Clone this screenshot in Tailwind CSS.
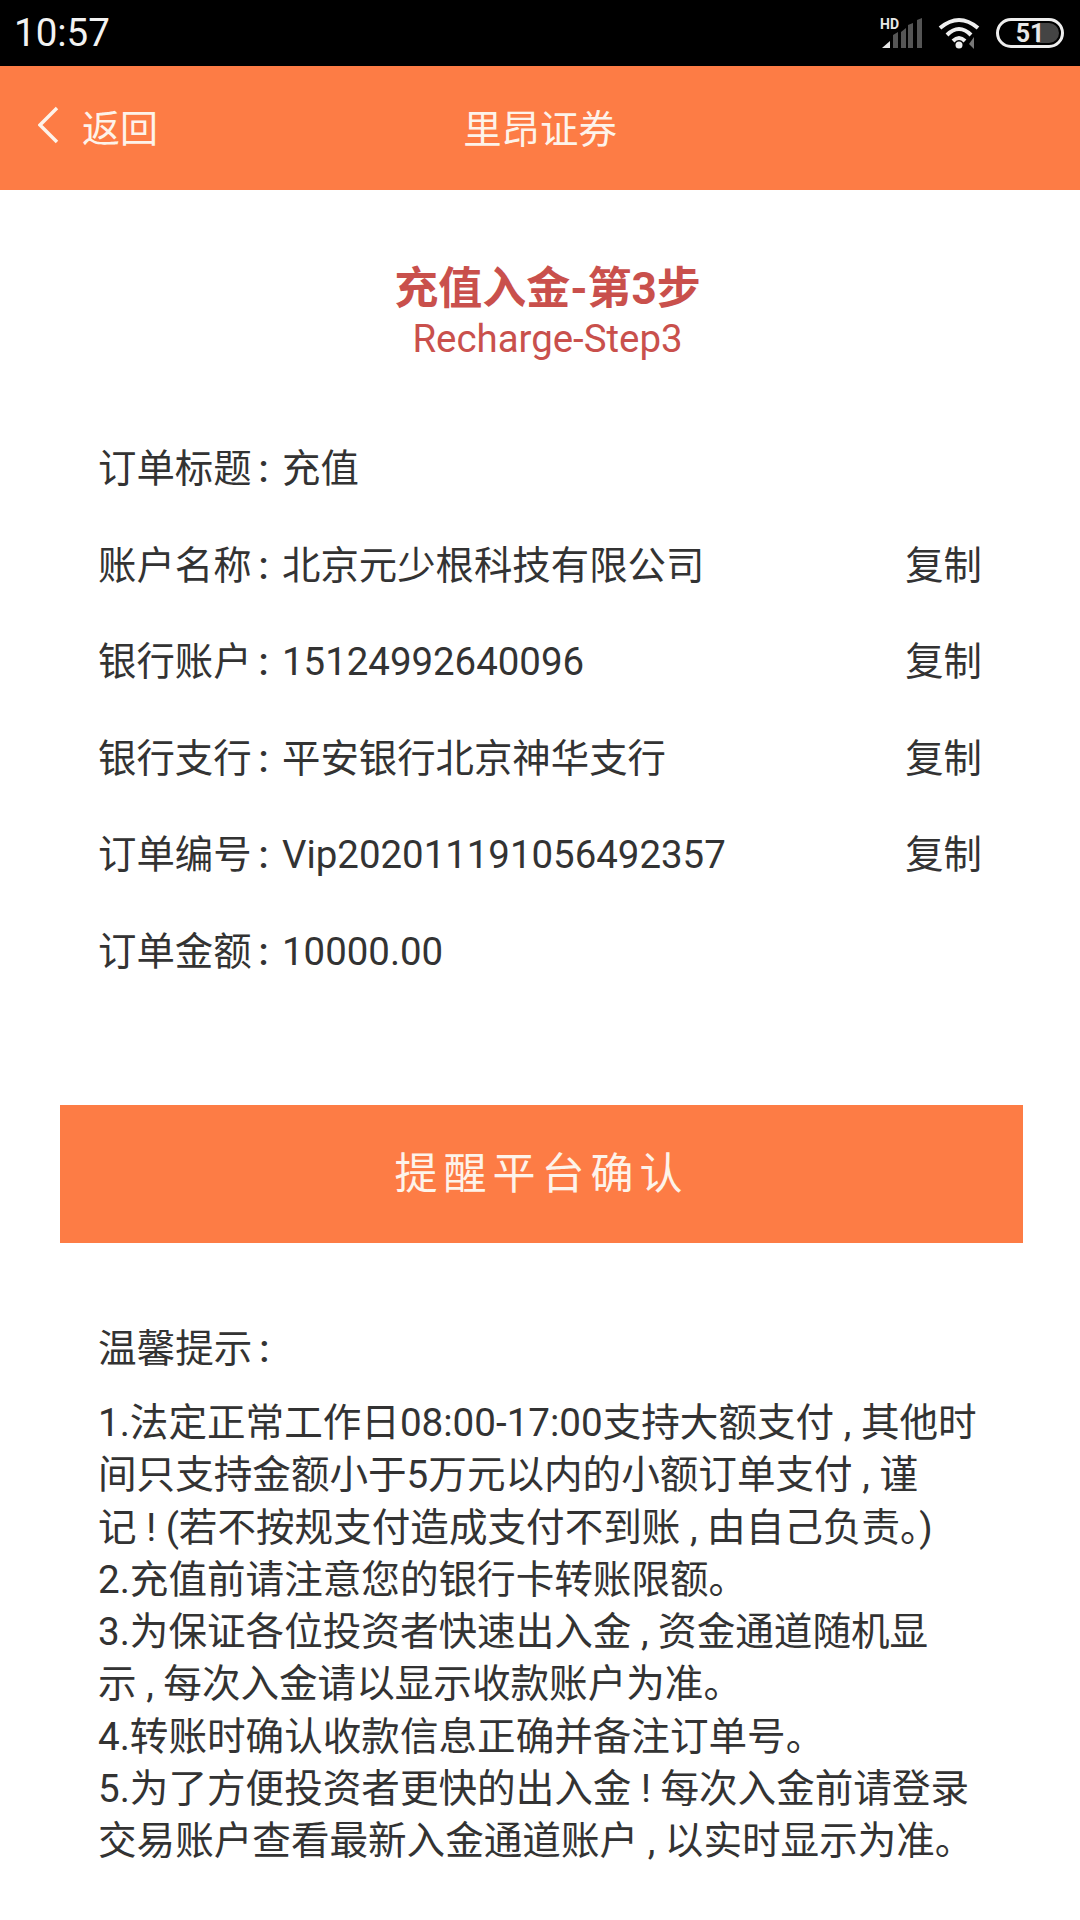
<!DOCTYPE html>
<html lang="zh-CN">
<head>
    <meta charset="UTF-8">
    <title>里昂证券</title>
    <script src="https://cdn.jsdelivr.net/npm/@tailwindcss/browser@4"></script>
</head>
<body class="bg-white font-['Roboto','Noto_Sans_CJK_SC',sans-serif]">
<div class="w-[1080px] h-[1920px] overflow-hidden flex flex-col">
    <!-- Status bar -->
    <div class="h-[66px] bg-black flex items-center justify-between pl-[14px] pr-4 text-white">
        <span class="text-[38.5px] leading-none text-[#f2f2f2]">10:57</span>
        <div class="flex items-center gap-4">
            <svg width="42" height="32" viewBox="0 0 42 32" class="overflow-visible">
                <text x="0" y="12" font-size="14" font-weight="700" fill="#e8e8e8" font-family="Roboto">HD</text>
                <path d="M2 31l8-7v7z" fill="#e8e8e8"/>
                <path d="M13 31V18l5-3v16zM21 31V15l5-4v20zM28 31V8l5-2v25zM37 31V3l5-2v30z" fill="#555"/>
            </svg>
            <svg width="42" height="32" viewBox="0 0 42 32">
                <path d="M2 11Q21-5 40 11" fill="none" stroke="#eee" stroke-width="4"/>
                <path d="M9 18Q21 6 33 18" fill="none" stroke="#eee" stroke-width="4"/>
                <path d="M15 24Q21 18 27 24" fill="none" stroke="#eee" stroke-width="4"/>
                <circle cx="21" cy="28" r="3.5" fill="#eee"/>
                <path d="M36 20v12l-5-5z" fill="#777"/>
            </svg>
            <div class="relative w-[68px] h-[30px] rounded-full border-[3px] border-[#eee] overflow-hidden flex items-center justify-center">
                <div class="absolute right-[2px] top-[2px] bottom-[2px] w-[22px] rounded-r-full bg-[#444]"></div>
                <span class="relative text-[25px] leading-none font-bold text-[#e8e8e8]">51</span>
            </div>
        </div>
    </div>

    <!-- Header -->
    <header class="relative h-[124px] bg-[#fd7c45] flex items-center justify-center text-[#fdf3ea] pt-[4px]">
        <div class="absolute left-[38px] top-0 h-full flex items-center gap-[22px]">
            <svg width="22" height="38" viewBox="0 0 22 38" class="-mt-[6px]"><path d="M19 2L2 19l17 17" fill="none" stroke="#fdf3ea" stroke-width="3.5"/></svg>
            <span class="text-[38px] pt-[3px]">返回</span>
        </div>
        <span class="text-[38.4px]">里昂证券</span>
    </header>

    <!-- Title -->
    <div class="pt-[72px] text-center text-[#c9504c] pl-[15px]">
        <p class="text-[44px] leading-[54px] font-bold">充值入金-第3步</p>
        <p class="text-[38.4px] leading-[46px]">Recharge-Step3</p>
    </div>

    <!-- Order info -->
    <div class="mt-[59px] pl-[98px] pr-[98px] text-[38.4px] text-[#333]">
        <div class="h-[96.5px] flex items-center justify-between"><span><span class="inline-block w-[184px]">订单标题<b class="ml-[7px] font-medium">:</b></span>充值</span></div>
        <div class="h-[96.5px] flex items-center justify-between"><span><span class="inline-block w-[184px]">账户名称<b class="ml-[7px] font-medium">:</b></span>北京元少根科技有限公司</span><span>复制</span></div>
        <div class="h-[96.5px] flex items-center justify-between"><span><span class="inline-block w-[184px]">银行账户<b class="ml-[7px] font-medium">:</b></span>15124992640096</span><span>复制</span></div>
        <div class="h-[96.5px] flex items-center justify-between"><span><span class="inline-block w-[184px]">银行支行<b class="ml-[7px] font-medium">:</b></span>平安银行北京神华支行</span><span>复制</span></div>
        <div class="h-[96.5px] flex items-center justify-between"><span><span class="inline-block w-[184px]">订单编号<b class="ml-[7px] font-medium">:</b></span>Vip202011191056492357</span><span>复制</span></div>
        <div class="h-[96.5px] flex items-center justify-between"><span><span class="inline-block w-[184px]">订单金额<b class="ml-[7px] font-medium">:</b></span>10000.00</span></div>
    </div>

    <!-- Confirm button -->
    <button class="mt-[105px] ml-[60px] w-[963px] h-[138px] bg-[#fd7c45] text-[#fdf3ea] text-[43px] tracking-[6px]">提醒平台确认</button>

    <!-- Tips -->
    <div class="mt-[78px] pl-[98px] pr-[60px] text-[38.6px] text-[#333]">
        <p class="leading-[56px] mb-[20px]">温馨提示<b class="ml-[7px] font-medium">:</b></p>
        <div class="leading-[52.3px] whitespace-nowrap">
            <p>1.法定正常工作日08:00-17:00支持大额支付 , 其他时</p>
            <p>间只支持金额小于5万元以内的小额订单支付 , 谨</p>
            <p>记 ! (若不按规支付造成支付不到账 , 由自己负责。)</p>
            <p>2.充值前请注意您的银行卡转账限额。</p>
            <p>3.为保证各位投资者快速出入金 , 资金通道随机显</p>
            <p>示 , 每次入金请以显示收款账户为准。</p>
            <p>4.转账时确认收款信息正确并备注订单号。</p>
            <p>5.为了方便投资者更快的出入金 ! 每次入金前请登录</p>
            <p>交易账户查看最新入金通道账户 , 以实时显示为准。</p>
        </div>
    </div>
</div>
</body>
</html>
